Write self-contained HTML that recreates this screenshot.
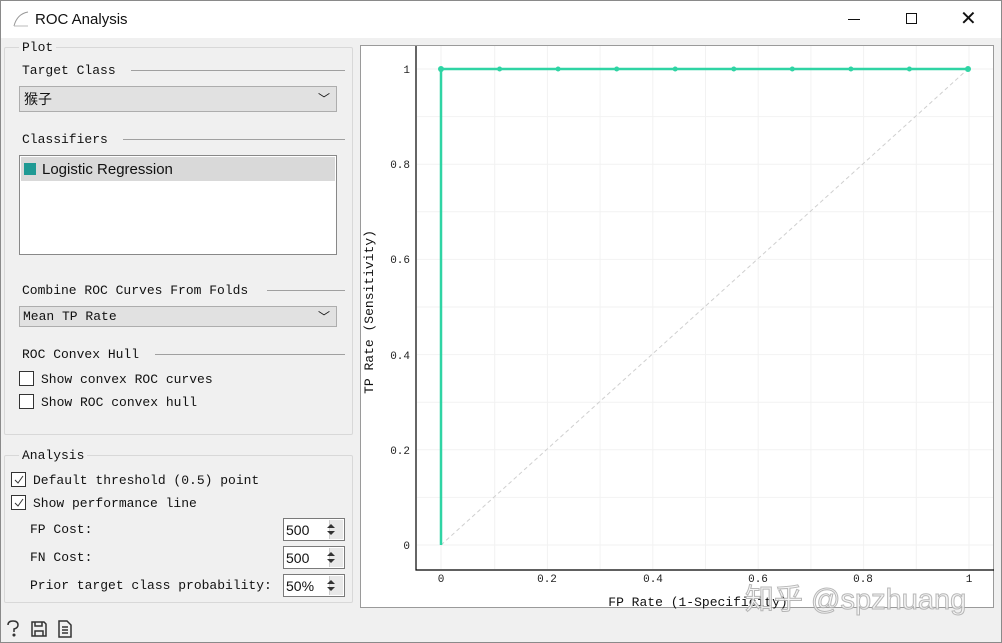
<!DOCTYPE html>
<html><head><meta charset="utf-8"><style>
*{margin:0;padding:0;box-sizing:border-box}
body{width:1002px;height:643px;overflow:hidden;background:#f0f0f0;font-family:"Liberation Mono","Noto Sans CJK SC",monospace;font-size:13px;color:#111;position:relative}
.a{position:absolute;white-space:nowrap}
.win{position:absolute;left:0;top:0;width:1002px;height:643px;border:1px solid #8a8a8a}
.title{position:absolute;left:1px;top:1px;width:1000px;height:37px;background:#fff}
.box{position:absolute;border:1px solid #d8d8d8;border-radius:2px}
.hr{position:absolute;height:1px;background:#a0a0a0}
.lbl{position:absolute;background:#f0f0f0;padding:0 3px;white-space:nowrap}
.combo{position:absolute;background:#e1e1e1;border:1px solid #adadad}
.cb{position:absolute;width:15px;height:15px;border:1px solid #333;background:#fff}
.spin{position:absolute;width:62px;height:23px;border:1px solid #7a7a7a;background:#fff}
.spin span{position:absolute;left:2px;top:3px;font-family:"Liberation Sans",sans-serif;font-size:14px}
.spin i{position:absolute;right:1px;top:1px;width:14px;height:19px;background:#e8e8e8;border-left:1px solid #ccc}
</style></head><body>
<div class="win"></div>
<div class="title"></div>
<svg class="a" style="left:12px;top:10px" width="18" height="18"><path d="M2 16 Q5 4 16 2" stroke="#999" fill="none"/><path d="M2 16 H16" stroke="#bbb"/></svg>
<div class="a" style="left:35px;top:11px;font-family:'Liberation Sans',sans-serif;font-size:15px">ROC Analysis</div>
<div class="a" style="left:848px;top:19px;width:12px;height:1px;background:#111"></div>
<div class="a" style="left:906px;top:13px;width:11px;height:11px;border:1px solid #111"></div>
<div class="a" style="left:960px;top:9px;font-family:'Liberation Sans',sans-serif;font-size:20px;line-height:20px">✕</div>

<div class="box" style="left:4px;top:47px;width:349px;height:388px"></div>
<div class="lbl" style="left:19px;top:40px">Plot</div>
<div class="a" style="left:22px;top:63px">Target Class</div><div class="hr" style="left:131px;top:70px;width:214px"></div>
<div class="combo" style="left:19px;top:86px;width:318px;height:26px"><span class="a" style="left:4px;top:4px;font-family:'Noto Sans CJK SC',sans-serif;font-size:14px;line-height:16px">猴子</span><span class="a" style="right:6px;top:3px;font-size:12px">﹀</span></div>
<div class="a" style="left:22px;top:132px">Classifiers</div><div class="hr" style="left:123px;top:139px;width:222px"></div>
<div class="a" style="left:19px;top:155px;width:318px;height:100px;background:#fff;border:1px solid #888"></div>
<div class="a" style="left:21px;top:157px;width:314px;height:24px;background:#d9d9d9"></div>
<div class="a" style="left:24px;top:163px;width:12px;height:12px;background:#1f9a94"></div>
<div class="a" style="left:42px;top:161px;font-family:'Liberation Sans',sans-serif;font-size:15px">Logistic Regression</div>
<div class="a" style="left:22px;top:283px">Combine ROC Curves From Folds</div><div class="hr" style="left:267px;top:290px;width:78px"></div>
<div class="combo" style="left:19px;top:306px;width:318px;height:21px"><span class="a" style="left:3px;top:2px">Mean TP Rate</span><span class="a" style="right:6px;top:1px;font-size:12px">﹀</span></div>
<div class="a" style="left:22px;top:347px">ROC Convex Hull</div><div class="hr" style="left:155px;top:354px;width:190px"></div>
<div class="cb" style="left:19px;top:371px"></div><div class="a" style="left:41px;top:372px">Show convex ROC curves</div>
<div class="cb" style="left:19px;top:394px"></div><div class="a" style="left:41px;top:395px">Show ROC convex hull</div>

<div class="box" style="left:4px;top:455px;width:349px;height:148px"></div>
<div class="lbl" style="left:19px;top:448px">Analysis</div>
<div class="cb" style="left:11px;top:472px"><svg class="a" style="left:1px;top:1px" width="12" height="12"><path d="M2 6 L5 9 L10 2" stroke="#333" fill="none"/></svg></div><div class="a" style="left:33px;top:473px">Default threshold (0.5) point</div>
<div class="cb" style="left:11px;top:495px"><svg class="a" style="left:1px;top:1px" width="12" height="12"><path d="M2 6 L5 9 L10 2" stroke="#333" fill="none"/></svg></div><div class="a" style="left:33px;top:496px">Show performance line</div>
<div class="a" style="left:30px;top:522px">FP Cost:</div>
<div class="a" style="left:30px;top:550px">FN Cost:</div>
<div class="a" style="left:30px;top:578px">Prior target class probability:</div>
<div class="spin" style="left:283px;top:518px"><span>500</span><i></i></div>
<div class="spin" style="left:283px;top:546px"><span>500</span><i></i></div>
<div class="spin" style="left:283px;top:574px"><span>50%</span><i></i></div>
<svg class="a" style="left:0;top:0" width="360" height="643">
<g fill="#333"><path d="M331 524l4 4h-8z M331 535l4-4h-8z M331 552l4 4h-8z M331 563l4-4h-8z M331 580l4 4h-8z M331 591l4-4h-8z"/></g>
<g stroke="#333" fill="none" stroke-width="1.5"><path d="M8 625q0-4 5-4q5 0 5 4q0 3-4 4v3"/><circle cx="14" cy="635" r="0.8"/>
<path d="M32 622h12l2 2v12h-14z M35 622v4h7v-4 M35 636v-5h8v5"/>
<path d="M59 621h8l4 4v12h-12z M62 627h6 M62 630h6 M62 633h6"/></g>
</svg>

<div class="a" style="left:360px;top:45px;width:634px;height:563px;background:#fff;border:1px solid #9a9a9a"></div>
<svg class="a" style="left:0;top:0" width="1002" height="643" font-family="Liberation Mono,monospace" font-size="11">
<g stroke="#f2f2f2">
<path d="M494.7 46V569M547.4 46V569M600.1 46V569M652.8 46V569M705.5 46V569M758.2 46V569M810.9 46V569M863.6 46V569M916.3 46V569M969 46V569M441 46V569"/>
<path d="M417 545H993M417 497.4H993M417 449.8H993M417 402.2H993M417 354.6H993M417 307H993M417 259.4H993M417 211.8H993M417 164.2H993M417 116.6H993M417 69H993"/>
</g>
<path d="M441 545L968 69" stroke="#cfcfcf" stroke-dasharray="4,3"/>
<path d="M416 46V570H994" stroke="#000" fill="none" stroke-width="1.2"/>
<path d="M441 545V69H968" stroke="#2fd4a4" stroke-width="2.5" fill="none"/>
<g fill="#2fd4a4"><circle cx="441" cy="69" r="3"/><circle cx="499.6" cy="69" r="2.5"/><circle cx="558.1" cy="69" r="2.5"/><circle cx="616.7" cy="69" r="2.5"/><circle cx="675.2" cy="69" r="2.5"/><circle cx="733.8" cy="69" r="2.5"/><circle cx="792.3" cy="69" r="2.5"/><circle cx="850.9" cy="69" r="2.5"/><circle cx="909.4" cy="69" r="2.5"/><circle cx="968" cy="69" r="3"/></g>
<g fill="#222" text-anchor="end"><text x="410" y="73">1</text><text x="410" y="168">0.8</text><text x="410" y="263">0.6</text><text x="410" y="359">0.4</text><text x="410" y="454">0.2</text><text x="410" y="549">0</text></g>
<g fill="#222" text-anchor="middle"><text x="441" y="582">0</text><text x="547" y="582">0.2</text><text x="653" y="582">0.4</text><text x="758" y="582">0.6</text><text x="863" y="582">0.8</text><text x="969" y="582">1</text></g>
<text x="698" y="606" text-anchor="middle" font-size="13" fill="#111">FP Rate (1-Specificity)</text>
<text transform="translate(373,312) rotate(-90)" text-anchor="middle" font-size="13" fill="#111">TP Rate (Sensitivity)</text>
<text x="745" y="609" font-family="Liberation Sans,Noto Sans CJK SC,sans-serif" font-size="29" fill="#f4f4f4" stroke="#b0b0b0" stroke-width="1" opacity="0.9">知乎 @spzhuang</text>
</svg>
</body></html>
